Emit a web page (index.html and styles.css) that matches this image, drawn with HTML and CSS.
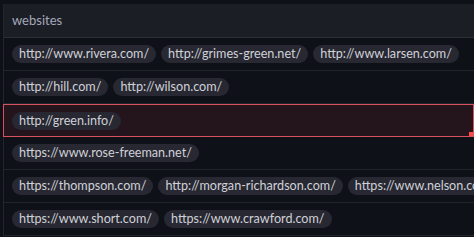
FILE: index.html
```html
<!DOCTYPE html>
<html lang="en">
<head>
    <meta charset="UTF-8">
    <title>websites</title>
    <link rel="stylesheet" href="styles.css">
</head>
<body>
    <div class="grid">
        <div class="header">websites</div>
        <div class="row">
            <span class="chip">http://www.rivera.com/</span>
            <span class="chip">http://grimes-green.net/</span>
            <span class="chip">http://www.larsen.com/</span>
        </div>
        <div class="row">
            <span class="chip">http://hill.com/</span>
            <span class="chip">http://wilson.com/</span>
        </div>
        <div class="row selected">
            <span class="chip">http://green.info/</span>
            <span class="handle"></span>
        </div>
        <div class="row">
            <span class="chip">https://www.rose-freeman.net/</span>
        </div>
        <div class="row">
            <span class="chip">https://thompson.com/</span>
            <span class="chip">http://morgan-richardson.com/</span>
            <span class="chip">https://www.nelson.com/</span>
        </div>
        <div class="row">
            <span class="chip">https://www.short.com/</span>
            <span class="chip">https://www.crawford.com/</span>
        </div>
    </div>
</body>
</html>
```

FILE: styles.css
```css
body {
    margin: 0;
    background-color: #0e1117;
    font-family: Lato, "Liberation Sans", sans-serif;
    overflow: hidden;
}

.grid {
    margin: 4px 0 0 3px;
    border-left: 1px solid #23252d;
}

.header {
    height: 33px;
    line-height: 33px;
    padding-left: 8px;
    background-color: #1c1e26;
    border-bottom: 1px solid #2c2e36;
    color: #a3a8b8;
    font-size: 13px;
}

.row {
    position: relative;
    display: flex;
    align-items: center;
    gap: 5px;
    height: 32px;
    padding-left: 8px;
    border-bottom: 1px solid #22242c;
    white-space: nowrap;
    overflow: hidden;
}

.chip {
    flex: none;
    height: 18px;
    line-height: 18px;
    padding: 0 7px;
    border-radius: 9px;
    background-color: #272832;
    color: #d0d1d7;
    font-size: 12.6px;
}

.selected {
    height: 31px;
    margin-left: -1px;
    padding-left: 8px;
    border: 1px solid #d9515f;
    background-color: #24141c;
}

.handle {
    position: absolute;
    right: 0;
    bottom: 0;
    width: 4px;
    height: 4px;
    background-color: #ff4b4b;
}
```
